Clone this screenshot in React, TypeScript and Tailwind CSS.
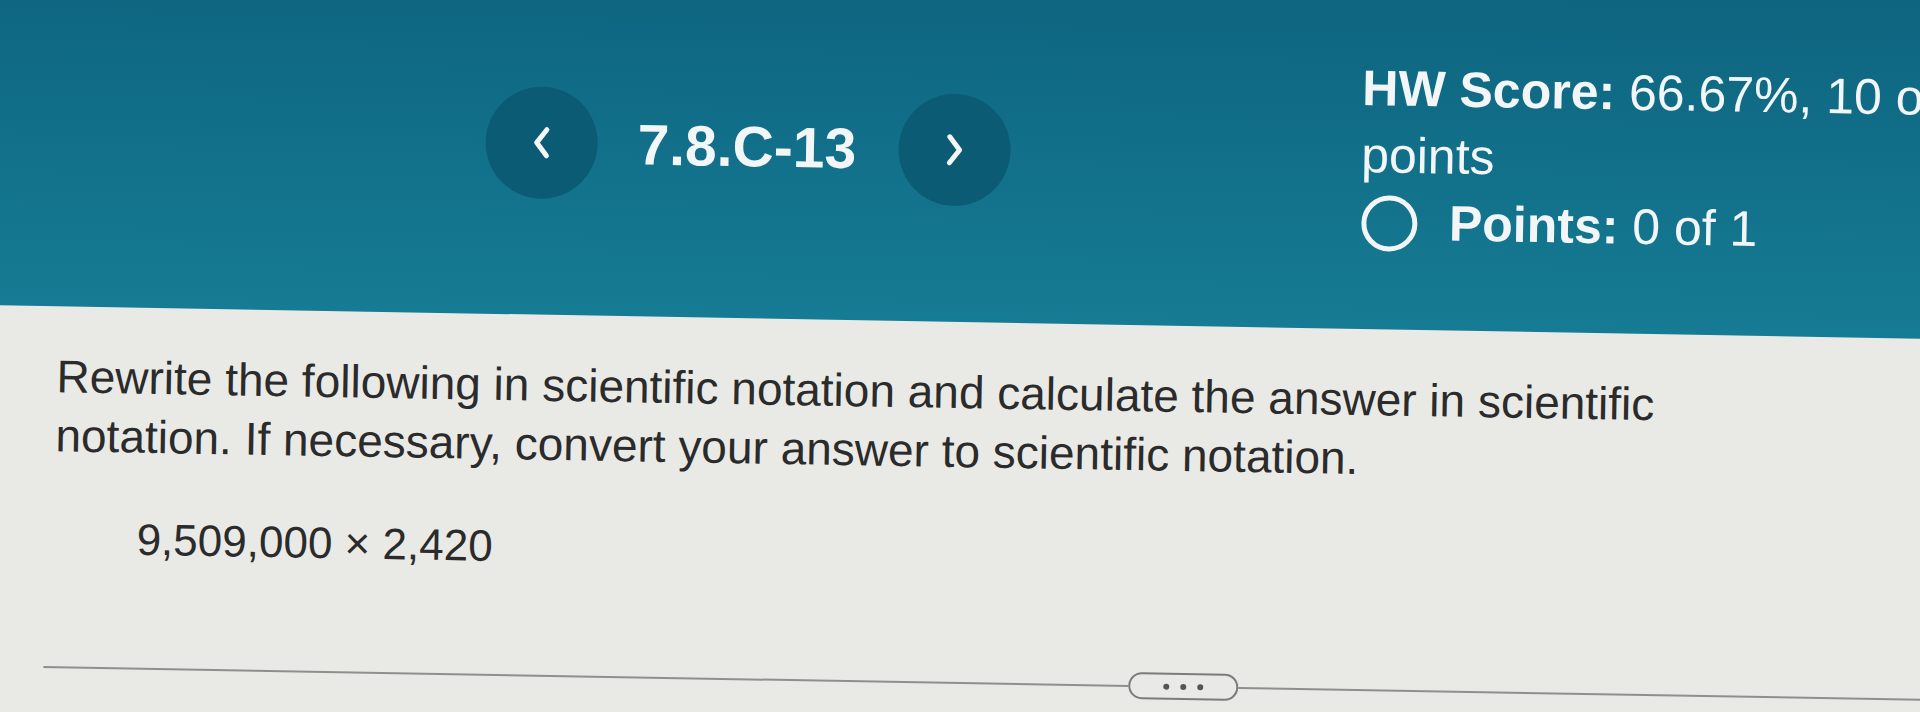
import React from 'react';

function Chevron({ dir }: { dir: 'left' | 'right' }) {
  return (
    <svg width="20" height="34" viewBox="0 0 20 34" fill="none">
      <polyline
        points={dir === 'left' ? '15,4 5,17 15,30' : '5,4 15,17 5,30'}
        stroke="#f4f7f8"
        strokeWidth="5"
        strokeLinecap="round"
        strokeLinejoin="round"
      />
    </svg>
  );
}

export default function App() {
  return (
    <div className="h-[712px] w-[1920px] overflow-hidden bg-[#e9eae6] font-['Liberation_Sans',Arial,sans-serif]">
      {/* the photo is tilted by about a degree, so the whole sheet is turned */}
      <div className="ml-[-40px] mt-[-40px] flex h-[792px] w-[2000px] rotate-[1deg] flex-col bg-[#e9eae6]">
        <header className="flex h-[362px] shrink-0 items-start bg-linear-to-b from-[#0d637e] to-[#167b94] pl-[40px] text-[#f3f6f7]">
          <nav className="ml-[482px] mt-[134px] flex items-center">
            <button className="flex h-[112px] w-[112px] items-center justify-center rounded-full bg-[#0c5b74]">
              <Chevron dir="left" />
            </button>
            <span className="ml-[40px] whitespace-nowrap text-[57px] font-bold leading-none">7.8.C-13</span>
            <button className="ml-[42px] flex h-[112px] w-[112px] items-center justify-center rounded-full bg-[#0c5b74]">
              <Chevron dir="right" />
            </button>
          </nav>

          <div className="ml-[351px] mt-[88px] whitespace-nowrap text-[50px] leading-[67px]">
            <div>
              <span className="font-bold">HW Score:</span> 66.67%, 10 of 15
            </div>
            <div>points</div>
            <div className="flex items-center">
              <svg width="58" height="58" viewBox="0 0 58 58" fill="none">
                <circle cx="29" cy="29" r="25.5" stroke="#f3f6f7" strokeWidth="5" />
              </svg>
              <span className="ml-[31px]">
                <span className="font-bold">Points:</span> 0 of 1
              </span>
            </div>
          </div>
        </header>

        <main className="flex-1 pl-[40px] text-[#2b2b2b]">
          <p className="ml-[57px] mt-[41px] w-[1680px] text-[46px] leading-[59px]">
            Rewrite the following in scientific notation and calculate the answer in scientific notation. If necessary,
            convert your answer to scientific notation.
          </p>
          <div className="ml-[140px] mt-[44px] text-[44px] leading-[58px]">9,509,000 × 2,420</div>

          <div className="ml-[49px] mt-[86px] flex items-center">
            <div className="h-[2px] w-[1085px] bg-[#8f8f8f]" />
            <button className="flex h-[27px] w-[110px] items-center justify-center gap-[11px] rounded-full border-2 border-[#7c7c7c]">
              <span className="h-[6px] w-[6px] rounded-full bg-[#555]" />
              <span className="h-[6px] w-[6px] rounded-full bg-[#555]" />
              <span className="h-[6px] w-[6px] rounded-full bg-[#555]" />
            </button>
            <div className="h-[2px] flex-1 bg-[#8f8f8f]" />
          </div>
        </main>
      </div>
    </div>
  );
}
